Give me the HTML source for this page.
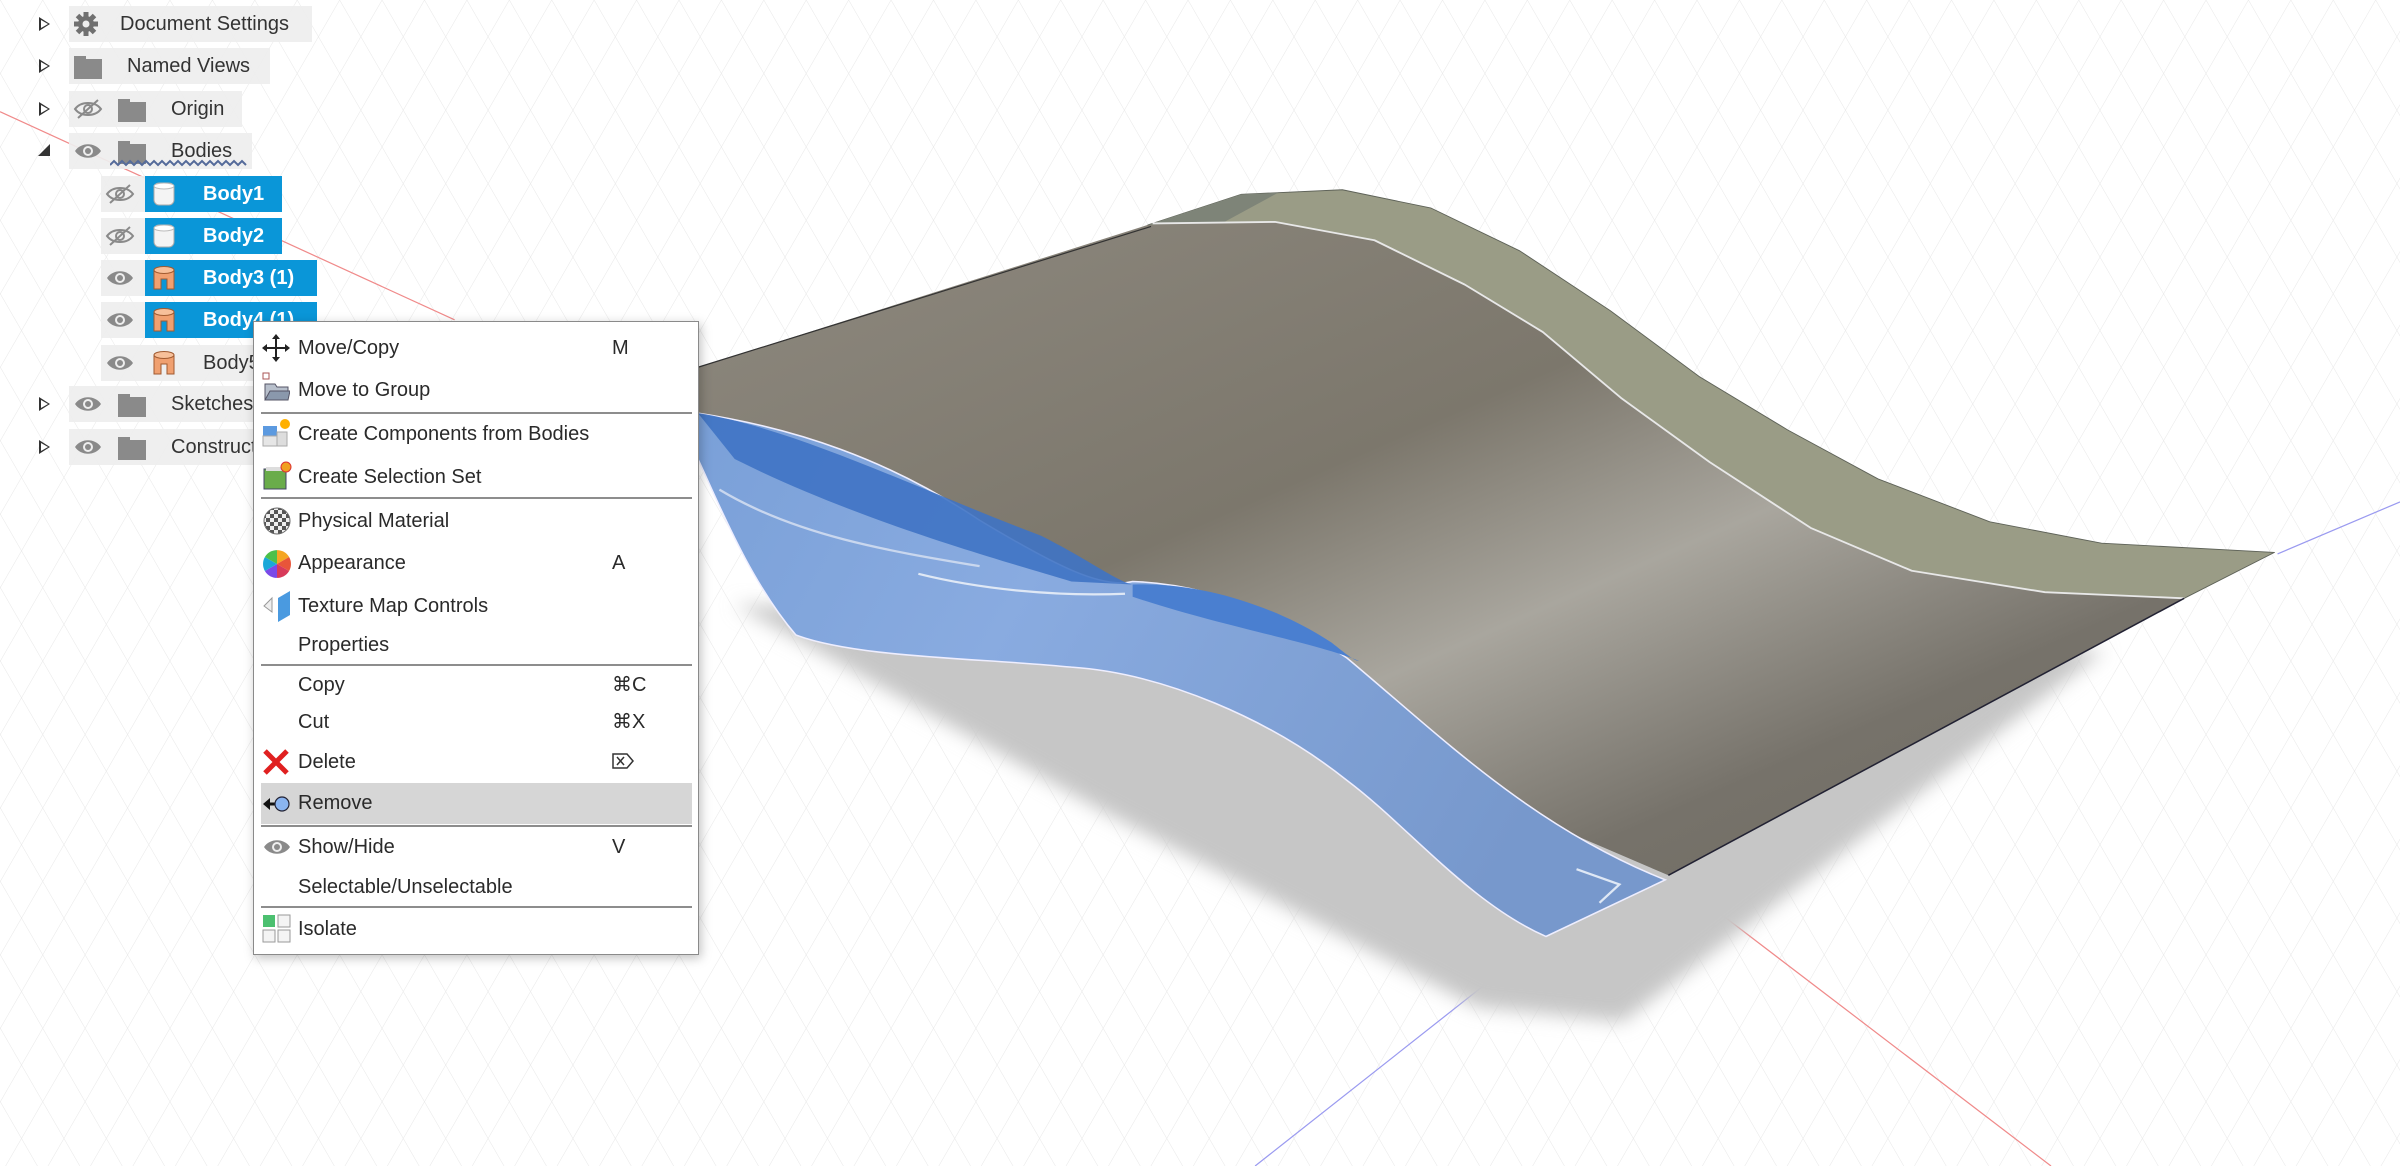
<!DOCTYPE html>
<html><head><meta charset="utf-8"><style>
body{margin:0;width:2400px;height:1166px;overflow:hidden;background:#fff;font-family:"Liberation Sans","DejaVu Sans",sans-serif;position:relative}
.bg{position:absolute;left:0;top:0}
.pill{position:absolute;height:36px;background:rgba(238,238,238,0.92)}
.t{position:absolute;font-size:20px;color:#333;line-height:36px;white-space:nowrap}
.sel{position:absolute;height:36px;background:#0a96d8}
.sel span{position:absolute;left:58px;line-height:36px;color:#fff;font-weight:bold;font-size:20px;white-space:nowrap}
.tri{position:absolute;width:0;height:0;border-top:7px solid transparent;border-bottom:7px solid transparent;border-left:11px solid #333}
.tri:after{content:"";position:absolute;left:-9px;top:-4.5px;border-top:4.5px solid transparent;border-bottom:4.5px solid transparent;border-left:7px solid #fff}
.ic{position:absolute}
#menu{position:absolute;left:253px;top:321px;width:444px;height:632px;background:#fff;border:1px solid #8a8a8a;box-shadow:2px 3px 10px rgba(0,0,0,.25)}
.mi{position:absolute;left:44px;font-size:20px;color:#2a2a2a;line-height:30px;white-space:nowrap}
.sc{position:absolute;left:358px;font-size:20px;color:#2a2a2a;line-height:30px}
.sep{position:absolute;left:7px;width:431px;height:2px;background:#8d8d8d}
</style></head><body>
<svg class="bg" width="2400" height="1166" viewBox="0 0 1568 762" preserveAspectRatio="none">
<defs>
<pattern id="ga" width="24" height="24" patternUnits="userSpaceOnUse" patternTransform="rotate(-30)">
<line x1="0" y1="0" x2="0" y2="24" stroke="#e8e8e8" stroke-width="0.7"/></pattern>
<pattern id="gb" width="24" height="24" patternUnits="userSpaceOnUse" patternTransform="rotate(30)">
<line x1="0" y1="0" x2="0" y2="24" stroke="#e8e8e8" stroke-width="0.7"/></pattern>
<linearGradient id="sg" x1="0" y1="0" x2="1" y2="1">
<stop offset="0" stop-color="#8e897f"/><stop offset="0.4" stop-color="#7c776c"/><stop offset="0.58" stop-color="#a9a69e"/><stop offset="0.78" stop-color="#76726a"/><stop offset="1" stop-color="#6f6b61"/></linearGradient>
<linearGradient id="bg2" x1="0" y1="0" x2="1" y2="0.3">
<stop offset="0" stop-color="#7aa0d8"/><stop offset="0.4" stop-color="#89abe0"/><stop offset="1" stop-color="#7798cc"/></linearGradient>
<filter id="bl"><feGaussianBlur stdDeviation="6"/></filter>
</defs>
<rect width="1568" height="762" fill="url(#ga)"/>
<rect width="1568" height="762" fill="url(#gb)"/>
<polyline points="0,73 297,209" stroke="#f08a8a" stroke-width="0.8" fill="none"/>
<polyline points="1095,575 1340,762" stroke="#f08a8a" stroke-width="0.8" fill="none"/>
<polyline points="1568,328 1488,362" stroke="#9a9af0" stroke-width="0.8" fill="none"/>
<polyline points="1010,612 820,762" stroke="#9a9af0" stroke-width="0.8" fill="none"/>
<polygon points="480,395 1375,425 1060,668 965,658 720,530" fill="#c6c6c6" filter="url(#bl)"/>
<path d="M753,146 L833,145 L898,157 L957,186 L1008,217 L1059,260 L1117,302 L1183,345 L1249,373 L1336,387 L1427,391 L1090,572 L456,300 L456,240 Z" fill="url(#sg)"/>
<path d="M750,147 L811,127 L877,124 L935,136 L993,164 L1052,203 L1110,246 L1168,281 L1227,313 L1300,341 L1373,355 L1486,361 L1427,391 L1336,387 L1249,373 L1183,345 L1117,302 L1059,260 L1008,217 L957,186 L898,157 L833,145 L753,146 Z" fill="#9a9c86" stroke="#5e6258" stroke-width="0.6" stroke-linejoin="round"/>
<polygon points="750,147 811,127 835,126 800,145" fill="#7e8478"/>
<polyline points="753,146 833,145 898,157 957,186 1008,217 1059,260 1117,302 1183,345 1249,373 1336,387 1427,391" fill="none" stroke="#e8e8e8" stroke-width="1.2" stroke-linejoin="round"/>
<line x1="752" y1="148" x2="456" y2="240" stroke="#333" stroke-width="0.8"/>
<line x1="1427" y1="391" x2="1090" y2="572" stroke="#223" stroke-width="1"/>
<path d="M456,270 C520,280 580,300 640,340 C690,370 720,385 740,380 C800,382 850,410 880,430 C940,480 1000,540 1088,575 L1010,612 C960,590 920,540 880,510 C830,470 760,440 700,436 C640,430 560,430 520,415 C490,380 470,330 456,300 Z" fill="url(#bg2)" stroke="#eef" stroke-width="1"/>
<path d="M456,270 C520,280 600,320 680,350 C710,365 730,380 740,382 L700,380 C650,365 560,340 480,300 Z" fill="#3f73c4" opacity="0.9"/>
<path d="M740,382 C790,380 840,400 870,420 C880,428 885,432 888,432 C860,420 800,410 740,390 Z" fill="#4a7fd0"/>
<path d="M600,375 C640,385 690,390 735,388" stroke="#dfe8f5" stroke-width="1.5" fill="none"/>
<path d="M470,320 C520,350 580,360 640,370" stroke="#c9d7ee" stroke-width="1.5" fill="none"/>
<path d="M1030,568 L1058,578 L1045,590" stroke="#dfe8f5" stroke-width="1.5" fill="none"/>
</svg>

<!-- tree -->
<div class="tri" style="left:39px;top:17px"></div>
<div class="pill" style="left:69px;top:6px;width:243px"></div>
<svg class="ic" style="left:70px;top:8px" width="32" height="32" viewBox="0 0 32 32"><g fill="#707070"><circle cx="16" cy="16" r="8"/><g stroke="#707070" stroke-width="5"><line x1="16" y1="4" x2="16" y2="28"/><line x1="4" y1="16" x2="28" y2="16"/><line x1="7.5" y1="7.5" x2="24.5" y2="24.5"/><line x1="24.5" y1="7.5" x2="7.5" y2="24.5"/></g></g><circle cx="16" cy="16" r="3.5" fill="#eee"/></svg>
<div class="t" style="left:120px;top:6px">Document Settings</div>

<div class="tri" style="left:39px;top:59px"></div>
<div class="pill" style="left:69px;top:48px;width:201px"></div>
<svg class="ic" style="left:73px;top:55px" width="30" height="24"><path d="M1 1h12v3h16v20H1z" fill="#8a8a8a"/></svg>
<div class="t" style="left:127px;top:48px">Named Views</div>

<div class="tri" style="left:39px;top:102px"></div>
<div class="pill" style="left:69px;top:91px;width:173px"></div>
<svg class="ic" style="left:73px;top:98px" width="30" height="22" viewBox="0 0 30 22"><path d="M2 11C8 3 22 3 28 11C22 19 8 19 2 11Z" fill="none" stroke="#8a8a8a" stroke-width="2"/><circle cx="15" cy="11" r="4" fill="none" stroke="#8a8a8a" stroke-width="2"/><line x1="5" y1="20" x2="25" y2="2" stroke="#8a8a8a" stroke-width="2"/></svg>
<svg class="ic" style="left:117px;top:98px" width="30" height="24"><path d="M1 1h12v3h16v20H1z" fill="#8a8a8a"/></svg>
<div class="t" style="left:171px;top:91px">Origin</div>

<div class="ic" style="left:38px;top:144px;width:0;height:0;border-left:12px solid transparent;border-bottom:12px solid #333"></div>
<div class="pill" style="left:69px;top:133px;width:183px"></div>
<svg class="ic" style="left:73px;top:140px" width="30" height="22" viewBox="0 0 30 22"><path d="M2 11C8 2 22 2 28 11C22 20 8 20 2 11Z" fill="#8a8a8a"/><circle cx="15" cy="11" r="5" fill="#eee"/><circle cx="15" cy="11" r="3" fill="#8a8a8a"/></svg>
<svg class="ic" style="left:117px;top:140px" width="30" height="24"><path d="M1 1h12v3h16v20H1z" fill="#8a8a8a"/></svg>
<div class="t" style="left:171px;top:133px">Bodies</div>
<svg class="ic" style="left:110px;top:159px" width="140" height="8"><path d="M0 6 L4 2 L8 6 L12 2 L16 6 L20 2 L24 6 L28 2 L32 6 L36 2 L40 6 L44 2 L48 6 L52 2 L56 6 L60 2 L64 6 L68 2 L72 6 L76 2 L80 6 L84 2 L88 6 L92 2 L96 6 L100 2 L104 6 L108 2 L112 6 L116 2 L120 6 L124 2 L128 6 L132 2 L136 6" fill="none" stroke="#556b9a" stroke-width="2"/></svg>

<!-- bodies -->
<div class="pill" style="left:101px;top:176px;width:44px"></div>
<svg class="ic" style="left:105px;top:183px" width="30" height="22" viewBox="0 0 30 22"><path d="M2 11C8 3 22 3 28 11C22 19 8 19 2 11Z" fill="none" stroke="#8a8a8a" stroke-width="2"/><circle cx="15" cy="11" r="4" fill="none" stroke="#8a8a8a" stroke-width="2"/><line x1="5" y1="20" x2="25" y2="2" stroke="#8a8a8a" stroke-width="2"/></svg>
<div class="sel" style="left:145px;top:176px;width:137px"><span>Body1</span></div>
<svg class="ic" style="left:152px;top:180px" width="26" height="28"><rect x="2" y="3" width="20" height="22" rx="5" fill="#f4f4f4" stroke="#aaa"/><ellipse cx="12" cy="6" rx="10" ry="3" fill="#fff" stroke="#bbb"/></svg>

<div class="pill" style="left:101px;top:218px;width:44px"></div>
<svg class="ic" style="left:105px;top:225px" width="30" height="22" viewBox="0 0 30 22"><path d="M2 11C8 3 22 3 28 11C22 19 8 19 2 11Z" fill="none" stroke="#8a8a8a" stroke-width="2"/><circle cx="15" cy="11" r="4" fill="none" stroke="#8a8a8a" stroke-width="2"/><line x1="5" y1="20" x2="25" y2="2" stroke="#8a8a8a" stroke-width="2"/></svg>
<div class="sel" style="left:145px;top:218px;width:137px"><span>Body2</span></div>
<svg class="ic" style="left:152px;top:222px" width="26" height="28"><rect x="2" y="3" width="20" height="22" rx="5" fill="#f4f4f4" stroke="#aaa"/><ellipse cx="12" cy="6" rx="10" ry="3" fill="#fff" stroke="#bbb"/></svg>

<div class="pill" style="left:101px;top:260px;width:44px"></div>
<svg class="ic" style="left:105px;top:267px" width="30" height="22" viewBox="0 0 30 22"><path d="M2 11C8 2 22 2 28 11C22 20 8 20 2 11Z" fill="#8a8a8a"/><circle cx="15" cy="11" r="5" fill="#eee"/><circle cx="15" cy="11" r="3" fill="#8a8a8a"/></svg>
<div class="sel" style="left:145px;top:260px;width:172px"><span>Body3 (1)</span></div>
<svg class="ic" style="left:152px;top:264px" width="26" height="28"><path d="M2 6v19h7v-10h6v10h7V6z" fill="#f0a070" stroke="#a05a30"/><ellipse cx="12" cy="6" rx="10" ry="3.5" fill="#f7c09a" stroke="#a05a30"/></svg>

<div class="pill" style="left:101px;top:302px;width:44px"></div>
<svg class="ic" style="left:105px;top:309px" width="30" height="22" viewBox="0 0 30 22"><path d="M2 11C8 2 22 2 28 11C22 20 8 20 2 11Z" fill="#8a8a8a"/><circle cx="15" cy="11" r="5" fill="#eee"/><circle cx="15" cy="11" r="3" fill="#8a8a8a"/></svg>
<div class="sel" style="left:145px;top:302px;width:172px"><span>Body4 (1)</span></div>
<svg class="ic" style="left:152px;top:306px" width="26" height="28"><path d="M2 6v19h7v-10h6v10h7V6z" fill="#f0a070" stroke="#a05a30"/><ellipse cx="12" cy="6" rx="10" ry="3.5" fill="#f7c09a" stroke="#a05a30"/></svg>

<div class="pill" style="left:101px;top:345px;width:160px"></div>
<svg class="ic" style="left:105px;top:352px" width="30" height="22" viewBox="0 0 30 22"><path d="M2 11C8 2 22 2 28 11C22 20 8 20 2 11Z" fill="#8a8a8a"/><circle cx="15" cy="11" r="5" fill="#eee"/><circle cx="15" cy="11" r="3" fill="#8a8a8a"/></svg>
<svg class="ic" style="left:152px;top:349px" width="26" height="28"><path d="M2 6v19h7v-10h6v10h7V6z" fill="#f0a070" stroke="#a05a30"/><ellipse cx="12" cy="6" rx="10" ry="3.5" fill="#f7c09a" stroke="#a05a30"/></svg>
<div class="t" style="left:203px;top:345px">Body5</div>

<div class="tri" style="left:39px;top:397px"></div>
<div class="pill" style="left:69px;top:386px;width:190px"></div>
<svg class="ic" style="left:73px;top:393px" width="30" height="22" viewBox="0 0 30 22"><path d="M2 11C8 2 22 2 28 11C22 20 8 20 2 11Z" fill="#8a8a8a"/><circle cx="15" cy="11" r="5" fill="#eee"/><circle cx="15" cy="11" r="3" fill="#8a8a8a"/></svg>
<svg class="ic" style="left:117px;top:393px" width="30" height="24"><path d="M1 1h12v3h16v20H1z" fill="#8a8a8a"/></svg>
<div class="t" style="left:171px;top:386px">Sketches</div>

<div class="tri" style="left:39px;top:440px"></div>
<div class="pill" style="left:69px;top:429px;width:190px"></div>
<svg class="ic" style="left:73px;top:436px" width="30" height="22" viewBox="0 0 30 22"><path d="M2 11C8 2 22 2 28 11C22 20 8 20 2 11Z" fill="#8a8a8a"/><circle cx="15" cy="11" r="5" fill="#eee"/><circle cx="15" cy="11" r="3" fill="#8a8a8a"/></svg>
<svg class="ic" style="left:117px;top:436px" width="30" height="24"><path d="M1 1h12v3h16v20H1z" fill="#8a8a8a"/></svg>
<div class="t" style="left:171px;top:429px">Construction</div>

<!-- menu -->
<div id="menu">
<svg class="ic" style="left:8px;top:12px" width="28" height="28" viewBox="0 0 28 28"><g stroke="#222" stroke-width="2"><line x1="14" y1="3" x2="14" y2="25"/><line x1="3" y1="14" x2="25" y2="14"/></g><g fill="#222"><path d="M14 0l-4 5h8z"/><path d="M14 28l-4-5h8z"/><path d="M0 14l5-4v8z"/><path d="M28 14l-5-4v8z"/></g></svg>
<div class="mi" style="top:11px">Move/Copy</div><div class="sc" style="top:11px">M</div>
<svg class="ic" style="left:8px;top:50px" width="28" height="30"><rect x="1" y="1" width="6" height="6" fill="#fff" stroke="#a55"/><path d="M3 12h10l2 3h11v13H3z" fill="#b8c0cc" stroke="#556"/><path d="M3 28l5-9h20l-2 9z" fill="#8a98ac" stroke="#556"/></svg>
<div class="mi" style="top:53px">Move to Group</div>
<div class="sep" style="top:90px"></div>
<svg class="ic" style="left:8px;top:96px" width="30" height="30"><rect x="1" y="8" width="14" height="10" fill="#5c9ae0"/><rect x="1" y="18" width="14" height="10" fill="#e6e6e6" stroke="#aaa"/><rect x="15" y="14" width="10" height="14" fill="#ddd" stroke="#aaa"/><circle cx="23" cy="6" r="5" fill="#ffb000"/></svg>
<div class="mi" style="top:97px">Create Components from Bodies</div>
<svg class="ic" style="left:8px;top:139px" width="30" height="30"><rect x="2" y="8" width="22" height="20" fill="#6aac4a" stroke="#446"/><rect x="4" y="6" width="20" height="4" fill="#ddd"/><circle cx="24" cy="6" r="5" fill="#f0a020" stroke="#d33"/></svg>
<div class="mi" style="top:140px">Create Selection Set</div>
<div class="sep" style="top:175px"></div>
<svg class="ic" style="left:8px;top:184px" width="30" height="30" viewBox="0 0 30 30"><defs><pattern id="ck" width="8" height="8" patternUnits="userSpaceOnUse"><rect width="8" height="8" fill="#eee"/><rect width="4" height="4" fill="#555"/><rect x="4" y="4" width="4" height="4" fill="#555"/></pattern></defs><circle cx="15" cy="15" r="13" fill="url(#ck)" stroke="#666"/></svg>
<div class="mi" style="top:184px">Physical Material</div>
<svg class="ic" style="left:8px;top:227px" width="30" height="30" viewBox="-14 -14 28 28"><path d="M0 0L0-13A13 13 0 0 1 11.3-6.5Z" fill="#f5a623"/><path d="M0 0L11.3-6.5A13 13 0 0 1 11.3 6.5Z" fill="#e8553a"/><path d="M0 0L11.3 6.5A13 13 0 0 1 0 13Z" fill="#d83a5a"/><path d="M0 0L0 13A13 13 0 0 1-11.3 6.5Z" fill="#7a4ae8"/><path d="M0 0L-11.3 6.5A13 13 0 0 1-11.3-6.5Z" fill="#1aa8d8"/><path d="M0 0L-11.3-6.5A13 13 0 0 1 0-13Z" fill="#4cc04a"/></svg>
<div class="mi" style="top:226px">Appearance</div><div class="sc" style="top:226px">A</div>
<svg class="ic" style="left:8px;top:268px" width="30" height="32"><path d="M2 16l8-8v14z" fill="#eee" stroke="#999"/><path d="M16 8l12-7v24l-12 7z" fill="#4a9ae0"/></svg>
<div class="mi" style="top:269px">Texture Map Controls</div>
<div class="mi" style="top:308px">Properties</div>
<div class="sep" style="top:342px"></div>
<div class="mi" style="top:348px">Copy</div><div class="sc" style="top:348px">⌘C</div>
<div class="mi" style="top:385px">Cut</div><div class="sc" style="top:385px">⌘X</div>
<svg class="ic" style="left:9px;top:427px" width="26" height="26"><g stroke="#e02020" stroke-width="5"><line x1="2" y1="2" x2="24" y2="24"/><line x1="24" y1="2" x2="2" y2="24"/></g></svg>
<div class="mi" style="top:425px">Delete</div>
<svg class="ic" style="left:358px;top:431px" width="22" height="16"><path d="M1 1h14l6 7-6 7H1z" fill="none" stroke="#333" stroke-width="1.5"/><path d="M5 4l7 8M12 4l-7 8" stroke="#333" stroke-width="1.5"/></svg>
<div style="position:absolute;left:7px;top:461px;width:431px;height:41px;background:#d6d6d6"></div>
<svg class="ic" style="left:8px;top:468px" width="30" height="28"><path d="M1 14l7-6v12z" fill="#111"/><line x1="6" y1="14" x2="14" y2="14" stroke="#111" stroke-width="3"/><circle cx="20" cy="14" r="7" fill="#8ab4f0" stroke="#223" stroke-width="1.2"/></svg>
<div class="mi" style="top:466px">Remove</div>
<div class="sep" style="top:503px"></div>
<svg class="ic" style="left:8px;top:514px" width="30" height="22" viewBox="0 0 30 22"><path d="M2 11C8 2 22 2 28 11C22 20 8 20 2 11Z" fill="#8a8a8a"/><circle cx="15" cy="11" r="5" fill="#eee"/><circle cx="15" cy="11" r="3" fill="#8a8a8a"/></svg>
<div class="mi" style="top:510px">Show/Hide</div><div class="sc" style="top:510px">V</div>
<div class="mi" style="top:550px">Selectable/Unselectable</div>
<div class="sep" style="top:584px"></div>
<svg class="ic" style="left:8px;top:592px" width="30" height="30"><rect x="1" y="1" width="12" height="12" fill="#4cc070"/><rect x="16" y="1" width="12" height="12" fill="#f4f4f4" stroke="#999"/><rect x="1" y="16" width="12" height="12" fill="#f4f4f4" stroke="#999"/><rect x="16" y="16" width="12" height="12" fill="#f4f4f4" stroke="#999"/></svg>
<div class="mi" style="top:592px">Isolate</div>
</div>
</body></html>
